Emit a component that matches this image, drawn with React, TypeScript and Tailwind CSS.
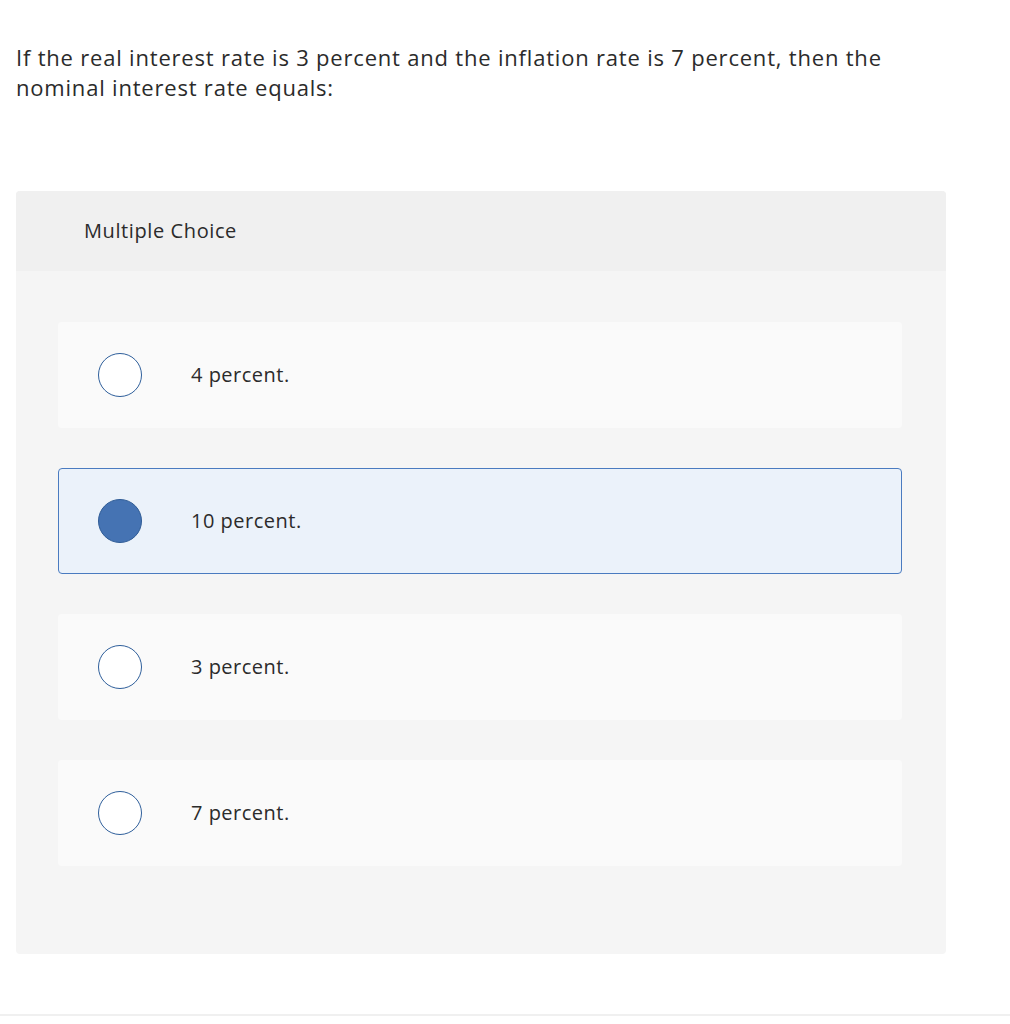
const options = [
  { id: "a", label: "4 percent.", selected: false },
  { id: "b", label: "10 percent.", selected: true },
  { id: "c", label: "3 percent.", selected: false },
  { id: "d", label: "7 percent.", selected: false },
]

export default function App() {
  return (
    <main
      className="min-h-[1024px] bg-white text-[#2b2b2b] flex flex-col"
      style={{ fontFamily: "'Open Sans', Lato, sans-serif" }}
    >
      <section className="px-4 pt-[42px]">
        <p className="text-[22px] leading-[30px] tracking-[0.8px] max-w-[920px]">
          If the real interest rate is 3 percent and the inflation rate is 7 percent, then the
          <br />
          nominal interest rate equals:
        </p>

        <div className="mt-[89px] w-[930px] rounded bg-[#f5f5f5] overflow-hidden">
          <div className="h-20 bg-[#f0f0f0] flex items-center px-[68px]">
            <h3 className="text-[20px] leading-none tracking-[0.6px]">Multiple Choice</h3>
          </div>

          <ul className="flex flex-col gap-10 pl-[42px] pr-[44px] pt-[51px] pb-[88px]">
            {options.map((option) => (
              <li
                key={option.id}
                className={
                  option.selected
                    ? "h-[106px] flex items-center gap-[49px] pl-[39px] rounded bg-[#ebf2fa] border-[1.5px] border-[#4a7bc0]"
                    : "h-[106px] flex items-center gap-[49px] pl-10 rounded bg-[#fafafa]"
                }
              >
                <span
                  className={
                    option.selected
                      ? "w-11 h-11 rounded-full bg-[#4573b3] border-[1.5px] border-[#2f5c96]"
                      : "w-11 h-11 rounded-full bg-white border-[1.5px] border-[#2f5f9b]"
                  }
                />
                <span className="text-[20px] leading-none tracking-[0.5px]">{option.label}</span>
              </li>
            ))}
          </ul>
        </div>
      </section>

      <div className="mt-auto mb-2 h-[2px] bg-[#f0f0f0]" />
    </main>
  )
}
